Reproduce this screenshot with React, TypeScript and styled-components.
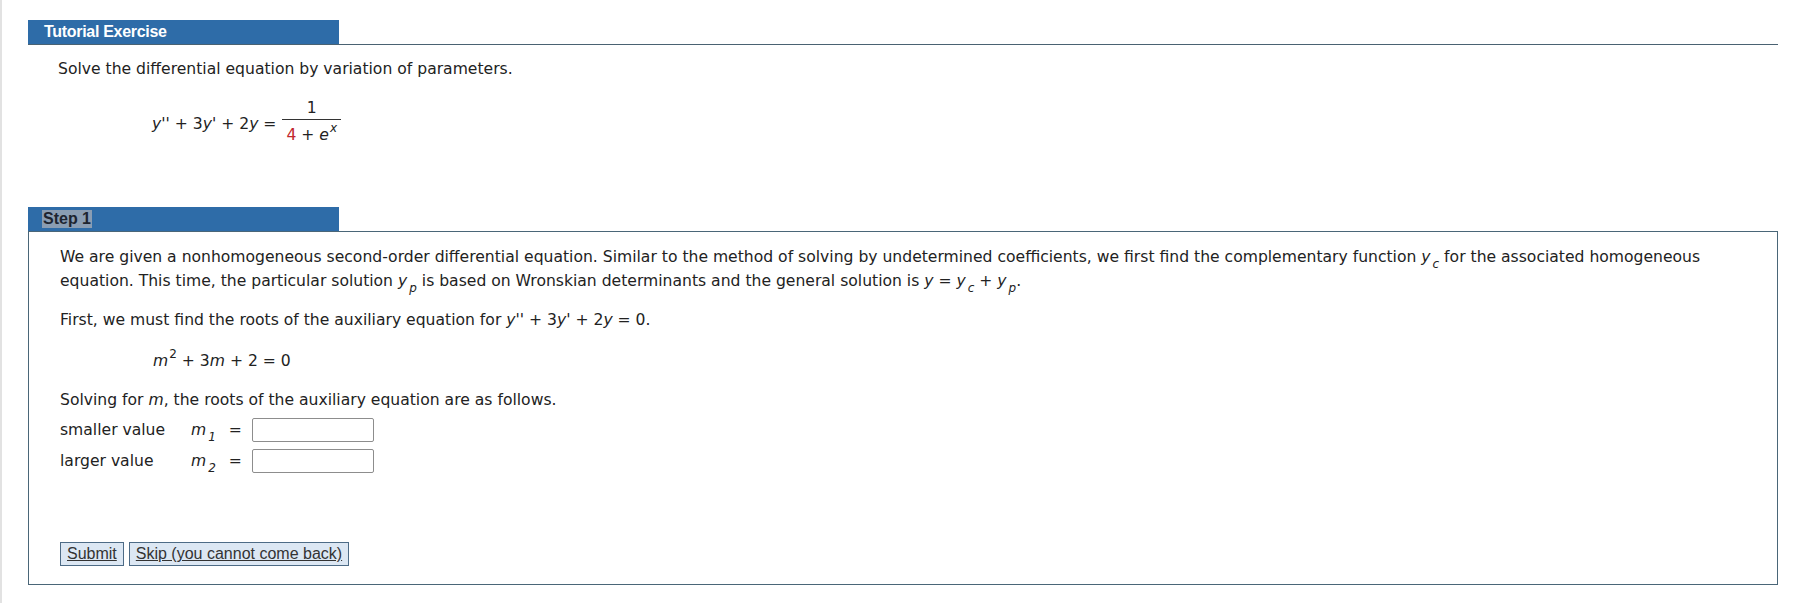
import styled, { createGlobalStyle } from "styled-components";

const GlobalStyle = createGlobalStyle`
  html, body {
    margin: 0;
    padding: 0;
    background: #ffffff;
  }
  body {
    font-family: "DejaVu Sans", Verdana, sans-serif;
    color: #222222;
  }
`;

const Page = styled.div`
  width: 1795px;
  height: 603px;
  box-sizing: border-box;
  border-left: 2px solid #e2e2e2;
  padding: 20px 17px 0 26px;
`;

const SectionHead = styled.div<{ ruled: boolean }>`
  display: flex;
  border-bottom: ${(p) => (p.ruled ? "1px solid #4a6272" : "none")};
`;

const Tab = styled.div`
  width: 311px;
  height: 24px;
  background: #2e6ca8;
  box-sizing: border-box;
  padding-left: 16px;
  display: flex;
  align-items: center;
  font-family: "Liberation Sans", Arial, sans-serif;
  font-weight: bold;
  font-size: 16px;
  letter-spacing: -0.3px;
  color: #ffffff;
`;

const StepLabel = styled.span`
  color: #1d2430;
  background: #8a9db3;
  padding: 0 1px;
  margin-left: -2px;
  letter-spacing: 0;
`;

const Intro = styled.div`
  padding: 12px 0 0 30px;
  font-size: 15.6px;
  line-height: 24px;
  height: 150px;
`;

const EquationRow = styled.div<{ indent: number; top: number }>`
  display: flex;
  align-items: center;
  padding-left: ${(p) => p.indent}px;
  margin-top: ${(p) => p.top}px;
  white-space: pre;
`;

const Frac = styled.span`
  display: inline-flex;
  flex-direction: column;
  align-items: center;
  margin-left: 6px;
  padding-bottom: 3px;
`;

const Num = styled.span`
  line-height: 22px;
  padding: 0 4px;
`;

const Den = styled.span`
  line-height: 24px;
  padding: 3px 4px 0;
  border-top: 1px solid #333;
`;

const Red = styled.span`
  color: #c1272d;
`;

const I = styled.i`
  font-style: italic;
`;

const Sup = styled.sup`
  font-size: 12px;
  vertical-align: 8px;
  line-height: 0;
  margin-left: 1px;
`;

const Sub = styled.sub`
  font-size: 12px;
  vertical-align: -6px;
  line-height: 0;
  margin-left: 2px;
  font-style: italic;
`;

const StepBox = styled.div`
  border: 1px solid #4a6678;
  padding: 13px 0 18px 31px;
  font-size: 15.6px;
  line-height: 24px;
`;

const Para = styled.p<{ top?: number }>`
  margin: ${(p) => p.top ?? 0}px 0 0 0;
  padding-right: 40px;
`;

const AnswerGrid = styled.div`
  display: grid;
  grid-template-columns: 131px 61px auto;
  row-gap: 7px;
  align-items: center;
  margin-top: 6px;
`;

const Eq = styled.span`
  display: flex;
  align-items: center;
  gap: 13px;
`;

const Answer = styled.input`
  width: 122px;
  height: 24px;
  box-sizing: border-box;
  border: 1px solid #8d8d8d;
  border-radius: 2px;
  margin: 0;
`;

const Buttons = styled.div`
  display: flex;
  gap: 5px;
  margin-top: 69px;
`;

const Button = styled.button`
  height: 24px;
  padding: 0 6px;
  background: #dce7f3;
  border: 1px solid #4d6b86;
  font-family: "Liberation Sans", Arial, sans-serif;
  font-size: 16px;
  color: #333333;
  text-decoration: underline;
  cursor: pointer;
`;

export default function App() {
  return (
    <Page>
      <GlobalStyle />
      <SectionHead ruled>
        <Tab>Tutorial Exercise</Tab>
      </SectionHead>
      <Intro>
        Solve the differential equation by variation of parameters.
        <EquationRow indent={94} top={16}>
          <span>
            <I>y''</I> + 3<I>y'</I> + 2<I>y</I> =
          </span>
          <Frac>
            <Num>1</Num>
            <Den>
              <Red>4</Red> + <I>e</I>
              <Sup>
                <I>x</I>
              </Sup>
            </Den>
          </Frac>
        </EquationRow>
      </Intro>
      <SectionHead ruled={false}>
        <Tab>
          <StepLabel>Step 1</StepLabel>
        </Tab>
      </SectionHead>
      <StepBox>
        <Para>
          We are given a nonhomogeneous second-order differential equation. Similar to the method of
          solving by undetermined coefficients, we first find the complementary function <I>y</I>
          <Sub>c</Sub> for the associated homogeneous equation. This time, the particular solution{" "}
          <I>y</I>
          <Sub>p</Sub> is based on Wronskian determinants and the general solution is <I>y</I> ={" "}
          <I>y</I>
          <Sub>c</Sub> + <I>y</I>
          <Sub>p</Sub>.
        </Para>
        <Para top={15}>
          First, we must find the roots of the auxiliary equation for <I>y''</I> + 3<I>y'</I> + 2
          <I>y</I> = 0.
        </Para>
        <EquationRow indent={93} top={17}>
          <span>
            <I>m</I>
            <Sup>2</Sup> + 3<I>m</I> + 2 = 0
          </span>
        </EquationRow>
        <Para top={15}>
          Solving for <I>m</I>, the roots of the auxiliary equation are as follows.
        </Para>
        <AnswerGrid>
          <span>smaller value</span>
          <Eq>
            <span>
              <I>m</I>
              <Sub>1</Sub>
            </span>
            =
          </Eq>
          <Answer />
          <span>larger value</span>
          <Eq>
            <span>
              <I>m</I>
              <Sub>2</Sub>
            </span>
            =
          </Eq>
          <Answer />
        </AnswerGrid>
        <Buttons>
          <Button>Submit</Button>
          <Button>Skip (you cannot come back)</Button>
        </Buttons>
      </StepBox>
    </Page>
  );
}
